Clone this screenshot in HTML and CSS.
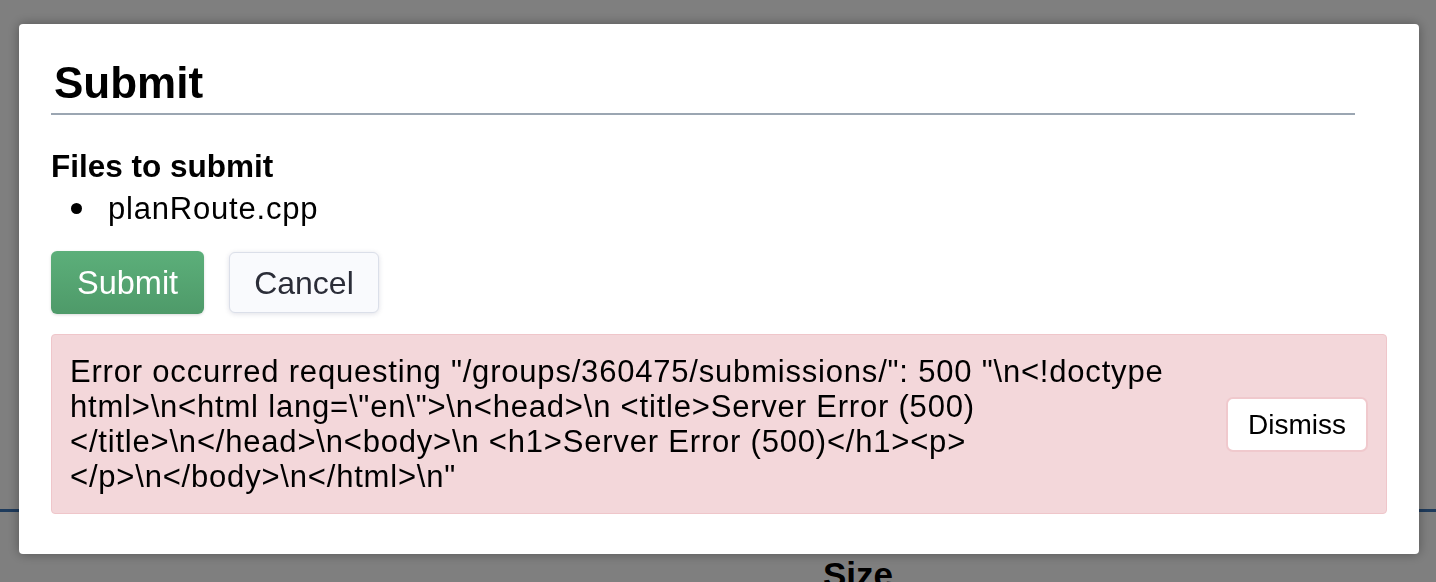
FILE: index.html
```html
<!DOCTYPE html>
<html lang="en">
<head>
<meta charset="utf-8">
<title>Submit</title>
<link rel="stylesheet" href="styles.css">
</head>
<body>
<div class="page">
  <div class="page-rule"></div>
  <div class="page-table-head">
    <span class="col-size">Size</span>
  </div>
</div>
<div class="overlay">
  <div class="modal">
    <h2 class="modal-title">Submit</h2>
    <h3 class="section-title">Files to submit</h3>
    <ul class="file-list">
      <li>planRoute.cpp</li>
    </ul>
    <div class="actions">
      <button class="btn btn-primary">Submit</button>
      <button class="btn btn-light">Cancel</button>
    </div>
    <div class="alert">
      <div class="alert-text">Error occurred requesting "/groups/360475/submissions/": 500 "\n&lt;!doctype html&gt;\n&lt;html lang=\"en\"&gt;\n&lt;head&gt;\n &lt;title&gt;Server Error (500) &lt;/title&gt;\n&lt;/head&gt;\n&lt;body&gt;\n &lt;h1&gt;Server Error (500)&lt;/h1&gt;&lt;p&gt; &lt;/p&gt;\n&lt;/body&gt;\n&lt;/html&gt;\n"</div>
      <button class="btn-dismiss">Dismiss</button>
    </div>
  </div>
</div>
</body>
</html>
```

FILE: styles.css
```css
html, body {
  margin: 0;
  padding: 0;
  background: #ffffff;
  font-family: "Liberation Sans", Arial, sans-serif;
  color: #000;
  overflow: hidden;
  height: 582px;
}

.page {
  padding-top: 509px;
}

.page-rule {
  height: 3px;
  background: #3d76b8;
}

.page-table-head {
  margin-top: 43px;
  padding-left: 823px;
}

.col-size {
  font-weight: bold;
  font-size: 35px;
  line-height: 40px;
}

.overlay {
  position: fixed;
  inset: 0;
  background: rgba(0, 0, 0, 0.5);
  display: flex;
  align-items: flex-start;
}

.modal {
  margin: 24px 17px 0 19px;
  flex: 1;
  background: #fff;
  border-radius: 4px;
  box-shadow: 0 0 12px rgba(0, 0, 0, 0.35);
  padding: 31px 32px 40px 32px;
}

.modal-title {
  margin: 0 32px 0 0;
  font-size: 44px;
  line-height: 53px;
  font-weight: bold;
  padding-top: 1px;
  padding-bottom: 4px;
  border-bottom: 2px solid #9ba6b2;
  text-indent: 3px;
}

.section-title {
  margin: 32px 0 6px 0;
  font-size: 31.5px;
  line-height: 38px;
  font-weight: bold;
}

.file-list {
  margin: 0;
  padding-left: 20px;
  list-style: none;
  font-size: 31px;
  letter-spacing: 0.8px;
  line-height: 35px;
}

.file-list li::before {
  content: "";
  display: inline-block;
  width: 11px;
  height: 11px;
  border-radius: 50%;
  background: #000;
  margin-right: 26px;
  vertical-align: middle;
  position: relative;
  top: -2px;
}

.actions {
  margin-top: 25px;
  display: flex;
  align-items: center;
  gap: 25px;
}

.btn {
  font-family: "Liberation Sans", Arial, sans-serif;
  font-size: 32.5px;
  line-height: 38px;
  border-radius: 6px;
  cursor: pointer;
}

.btn-primary {
  padding: 13px 26px 12px;
  color: #fff;
  border: none;
  background: linear-gradient(#5caf7a, #4e9a69);
  box-shadow: 0 1px 3px rgba(0, 0, 0, 0.15);
}

.btn-light {
  padding: 11px 24px 10px;
  color: #2b2d38;
  font-size: 32px;
  background: #f9fafd;
  border: 1px solid #dbdfe9;
  box-shadow: 0 1px 5px rgba(40, 50, 90, 0.15);
}

.alert {
  margin-top: 20px;
  display: flex;
  align-items: center;
  gap: 20px;
  padding: 19px 18px 19px 18px;
  background: #f3d7da;
  border: 1px solid #efc6ca;
  border-radius: 4px;
}

.alert-text {
  flex: 1;
  font-size: 31px;
  letter-spacing: 0.8px;
  line-height: 35px;
}

.btn-dismiss {
  font-family: "Liberation Sans", Arial, sans-serif;
  font-size: 28px;
  line-height: 32px;
  padding: 10px 20px 9px;
  width: 142px;
  background: #fff;
  color: #000;
  border: 2px solid #f0c9cd;
  border-radius: 7px;
}
```
